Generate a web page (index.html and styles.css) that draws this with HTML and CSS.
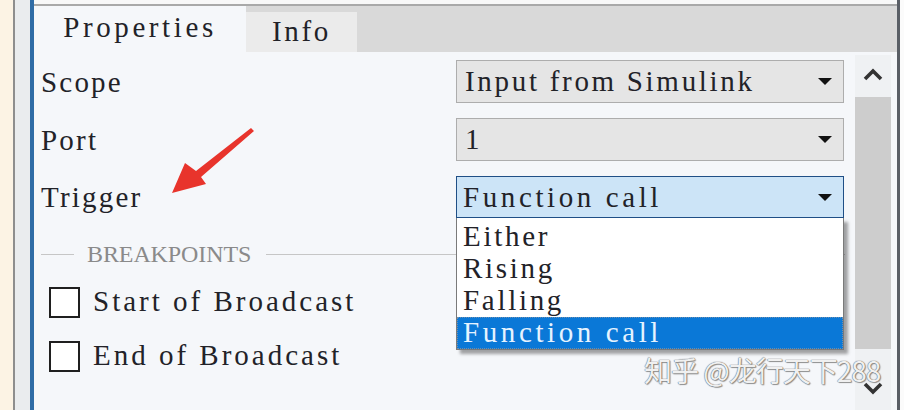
FILE: index.html
```html
<!DOCTYPE html>
<html>
<head>
<meta charset="utf-8">
<link rel="stylesheet" href="styles.css">
</head>
<body>
<div class="window">
  <div class="side">
    <div class="side-cream"></div>
    <div class="side-line"></div>
    <div class="side-grey"></div>
    <div class="side-blue"></div>
  </div>
  <div class="panel">
    <div class="topgap"></div>
    <div class="tabs">
      <div class="tab tab-active">Properties</div>
      <div class="tab tab-info">Info</div>
    </div>
    <div class="body">
      <div class="form">
        <div class="grid">
          <div class="label">Scope</div>
          <div class="select"><span>Input from Simulink</span><i class="caret"></i></div>
          <div class="label">Port</div>
          <div class="select"><span>1</span><i class="caret"></i></div>
          <div class="label">Trigger</div>
          <div class="select-wrap">
            <div class="select select-open"><span>Function call</span><i class="caret"></i></div>
            <div class="list">
              <div class="item">Either</div>
              <div class="item">Rising</div>
              <div class="item">Falling</div>
              <div class="item item-sel">Function call</div>
            </div>
          </div>
        </div>
        <div class="legend">
          <div class="legend-line short"></div>
          <div class="legend-text">BREAKPOINTS</div>
          <div class="legend-line long"></div>
        </div>
        <div class="check"><div class="box"></div><span>Start of Broadcast</span></div>
        <div class="check"><div class="box"></div><span>End of Broadcast</span></div>
        <svg class="arrow" width="95" height="78" viewBox="0 0 95 78">
          <polygon points="8,71 21,41 32,49 87,6 90,9 37,55 42,62" fill="#e8342c"/>
        </svg>
      </div>
      <div class="scrollbar">
        <svg class="chev" width="20" height="14" viewBox="0 0 20 14"><polyline points="2,12 10,4 18,12" fill="none" stroke="#333" stroke-width="3.6"/></svg>
        <div class="thumb"></div>
        <div class="track-rest"></div>
        <svg class="chev" width="20" height="14" viewBox="0 0 20 14"><polyline points="2,2 10,10 18,2" fill="none" stroke="#333" stroke-width="3.6"/></svg>
      </div>
      <div class="watermark">知乎 @龙行天下288</div>
    </div>
  </div>
  <div class="edge">
    <div class="edge-dark"></div>
    <div class="edge-white"></div>
  </div>
</div>
</body>
</html>
```
FILE: styles.css
```css
html, body {
  margin: 0;
  padding: 0;
  width: 904px;
  height: 410px;
  overflow: hidden;
  background: #f5f7fa;
}
.window {
  display: flex;
  width: 904px;
  height: 410px;
  font-family: "Liberation Serif", serif;
  font-size: 29px;
  letter-spacing: 2.7px;
  color: #222228;
}
.side { display: flex; height: 100%; }
.side-cream { width: 13px; background: #fcf3e4; }
.side-line { width: 2px; background: #8e8e8e; }
.side-grey { width: 15px; background: #eaecee; }
.side-blue { width: 4px; background: #2f6ca6; }

.panel {
  flex: 1;
  display: flex;
  flex-direction: column;
  min-width: 0;
}
.topgap { height: 4px; background: #f8f8f8; border-bottom: 2px solid #a9a9a9; }
.tabs {
  height: 46px;
  background: #d9d9d9;
  display: flex;
  align-items: flex-end;
}
.tab {
  text-align: center;
  line-height: 1;
}
.tab-active {
  width: 212px;
  height: 46px;
  background: #f5f7fa;
  display: flex;
  align-items: center;
  justify-content: center;
  padding-bottom: 4px;
  box-sizing: border-box;
  letter-spacing: 3.6px;
}
.tab-info {
  width: 111px;
  height: 40px;
  background: #ebebeb;
  display: flex;
  align-items: center;
  justify-content: center;
  padding-bottom: 2px;
  box-sizing: border-box;
}

.body {
  flex: 1;
  display: flex;
  position: relative;
}
.form {
  flex: 1;
  padding: 8px 0 0 7px;
  position: relative;
}
.grid {
  display: grid;
  grid-template-columns: 415px 388px;
  row-gap: 15px;
  align-items: center;
}
.label { line-height: 1; padding-bottom: 0; padding-top: 1px; letter-spacing: 2.2px; }
.select {
  height: 43px;
  box-sizing: border-box;
  border: 1px solid #adadad;
  background: #e5e5e5;
  display: flex;
  align-items: center;
  padding: 0 11px 0 8px;
  line-height: 1;
}
.select span { flex: 1; }
.caret {
  width: 0;
  height: 0;
  border-left: 7px solid transparent;
  border-right: 7px solid transparent;
  border-top: 7px solid #111;
}
.select-wrap { position: relative; }
.select-open {
  height: 42px;
  background: #cce4f7;
  border: 1px solid #1f4f86;
  padding-left: 6px;
  letter-spacing: 3.6px;
}
.list {
  position: absolute;
  top: 100%;
  left: 0;
  width: 388px;
  box-sizing: border-box;
  background: #ffffff;
  border: 1px solid #7a7a7a;
  border-top: none;
  padding-top: 3px;
  box-shadow: 4px 4px 3px rgba(0,0,0,0.35);
  z-index: 2;
}
.item {
  height: 32px;
  line-height: 30px;
  padding-left: 6px;
}
.item-sel {
  background: #0a78d7;
  color: #e6f3ff;
  outline: 1px dotted #6f8fae;
  outline-offset: -1px;
  letter-spacing: 3.6px;
}

.legend {
  display: flex;
  align-items: center;
  margin-top: 24px;
  height: 24px;
  color: #8a8a8a;
}
.legend-line { height: 1px; background: #c6c6c6; }
.legend-line.short { width: 33px; }
.legend-line.long { flex: 1; }
.legend-text {
  padding: 0 15px 1px 13px;
  line-height: 1;
  font-size: 24px;
  letter-spacing: -0.1px;
}

.check {
  display: flex;
  align-items: center;
  gap: 13px;
  margin-left: 8px;
  line-height: 1;
}
.legend + .check { margin-top: 21px; }
.check + .check { margin-top: 23px; }
.check span { padding-bottom: 2px; letter-spacing: 3px; }
.box {
  width: 27px;
  height: 27px;
  border: 2px solid #1f1f1f;
  background: #ffffff;
}

.arrow {
  position: absolute;
  left: 130px;
  top: 70px;
}
.watermark {
  position: absolute;
  left: 610px;
  top: 304px;
  white-space: nowrap;
  font-family: "Noto Sans CJK SC", sans-serif;
  font-size: 28px;
  letter-spacing: -1px;
  line-height: 1;
  color: rgba(255,255,255,0.92);
  text-shadow: 0 0 1px #666, 0 0 1px #666, 1px 1px 1px #999;
  z-index: 3;
}

.scrollbar {
  width: 36px;
  margin: 3px 6px 0 10px;
  background: #eff1f3;
  display: flex;
  flex-direction: column;
  align-items: center;
}
.chev { margin: 12px 0 16px; }
.scrollbar .chev:last-child { margin: 16px 0 14px; }
.thumb {
  width: 36px;
  height: 252px;
  background: #cdcdcd;
}
.track-rest { flex: 1; }

.edge { display: flex; height: 100%; }
.edge-dark { width: 3px; background: #5a5f66; }
.edge-white { width: 4px; background: #fbfbfb; }
```
